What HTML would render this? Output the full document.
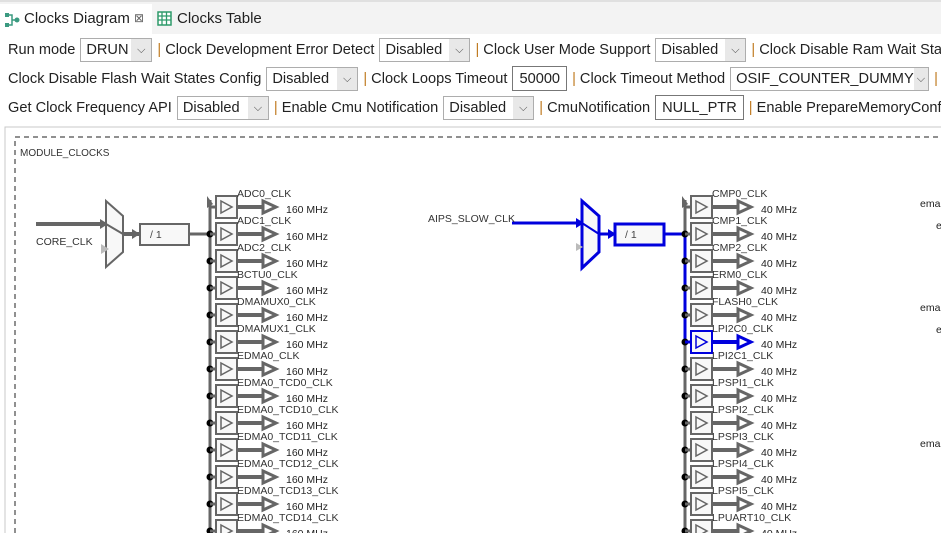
<!DOCTYPE html>
<html><head><meta charset="utf-8"><style>
body{margin:0;width:941px;height:533px;overflow:hidden;background:#fff;font-family:"Liberation Sans",sans-serif;position:relative}
.tabs{position:absolute;left:0;top:0;width:941px;height:34px;background:#f3f3f3;border-top:2px solid #e0e0e0;box-sizing:border-box}
.tab1{position:absolute;left:0;top:2px;width:152px;height:32px;background:#fff}
.tt{position:absolute;font-size:15px;color:#222;top:8px;font-family:"Liberation Sans",sans-serif}
.row{position:absolute;left:8px;font-size:14.6px;color:#222;white-space:nowrap;display:flex;align-items:center}
.sel{display:inline-flex;align-items:center;height:24px;border:1px solid #adadad;margin:0 5px;padding-left:5px;box-sizing:border-box;background:#fff}
.sel span{display:inline-block;width:20px;height:22px;background:#e8e8e8;margin-left:4px;text-align:center;font-size:11px;line-height:22px;color:#444}
.txt{display:inline-block;height:25px;border:1px solid #777;margin:0 5px;padding:0 6px;line-height:25px;box-sizing:border-box}
.p{color:#c07a20}
</style></head><body>
<div class="tabs"><div class="tab1"></div>
<svg style="position:absolute;left:4px;top:10px" width="16" height="16"><rect x="1" y="1" width="4" height="4" fill="#3a9a80"/><rect x="1" y="11" width="4" height="4" fill="#3a9a80"/><path d="M5 3H8V13H5M8 8H11" stroke="#3a9a80" stroke-width="1.5" fill="none"/><circle cx="13" cy="8" r="2.5" fill="#3a9a80"/></svg>
<div class="tt" style="left:24px">Clocks Diagram</div>
<div class="tt" style="left:134px;font-size:12px;color:#666;top:9px">⊠</div>
<svg style="position:absolute;left:157px;top:9px" width="15" height="15"><rect x="1" y="1" width="13" height="13" fill="#fff" stroke="#2e9a6a" stroke-width="1.5"/><path d="M1 5H14M1 9H14M5 1V14M9.5 1V14" stroke="#2e9a6a" stroke-width="1.3"/></svg>
<div class="tt" style="left:177px">Clocks Table</div>
</div>
<div class="row" style="top:38px">Run mode<div class="sel" style="width:72px">DRUN<span style="margin-left:auto">⌵</span></div><span class="p">|</span>&nbsp;Clock Development Error Detect<div class="sel" style="width:91px">Disabled<span style="margin-left:auto">⌵</span></div><span class="p">|</span>&nbsp;Clock User Mode Support<div class="sel" style="width:91px">Disabled<span style="margin-left:auto">⌵</span></div><span class="p">|</span>&nbsp;Clock Disable Ram Wait States</div>
<div class="row" style="top:66px">Clock Disable Flash Wait States Config<div class="sel" style="width:92px">Disabled<span style="margin-left:auto">⌵</span></div><span class="p">|</span>&nbsp;Clock Loops Timeout<div class="txt">50000</div><span class="p">|</span>&nbsp;Clock Timeout Method<div class="sel" style="width:199px">OSIF_COUNTER_DUMMY<span style="margin-left:auto">⌵</span></div><span class="p">|</span>&nbsp;C</div>
<div class="row" style="top:95px">Get Clock Frequency API<div class="sel" style="width:92px">Disabled<span style="margin-left:auto">⌵</span></div><span class="p">|</span>&nbsp;Enable Cmu Notification<div class="sel" style="width:91px">Disabled<span style="margin-left:auto">⌵</span></div><span class="p">|</span>&nbsp;CmuNotification<div class="txt">NULL_PTR</div><span class="p">|</span>&nbsp;Enable PrepareMemoryConfig</div>
<svg style="position:absolute;left:0;top:0" width="941" height="533" font-family="Liberation Sans,sans-serif" font-size="10.5">
<path d="M5 533V127H941" stroke="#c8c8c8" fill="none"/>
<path d="M15 533V137H941" stroke="#222" stroke-dasharray="5,4" fill="none"/>
<text x="20" y="156" font-size="10" fill="#333">MODULE_CLOCKS</text>
<text x="920" y="207" fill="#222">ema</text><text x="936" y="229" fill="#222">e</text>
<text x="920" y="311" fill="#222">ema</text><text x="936" y="333" fill="#222">e</text>
<text x="920" y="447" fill="#222">ema</text>
<path d="M36 224H106" stroke="#666" stroke-width="4"/><polygon points="100,219 108,224 100,229" fill="#666"/>
<polygon points="106,201 123,216 123,252 106,267" fill="#f8f8f8" stroke="#666" stroke-width="2"/>
<path d="M106 224L123 234" stroke="#666" stroke-width="2"/>
<polygon points="101,244 109,249 101,254" fill="#bbb"/>
<text x="36" y="245" fill="#333" font-size="10.5">CORE_CLK</text>
<path d="M123 234H140" stroke="#666" stroke-width="4"/><polygon points="132,229 140,234 132,239" fill="#666"/>
<rect x="140" y="224" width="49" height="21" fill="#f8f8f8" stroke="#666" stroke-width="2"/>
<text x="150" y="238" fill="#444">/ 1</text>
<path d="M189 234H210M210 200V533" stroke="#666" stroke-width="3"/>
<polygon points="207,196 213,204 207,208" fill="#666"/>
<path d="M512 223H582" stroke="#0000dd" stroke-width="3"/><polygon points="576,218 584,223 576,228" fill="#0000dd"/>
<polygon points="582,201 599,216 599,252 582,268" fill="#f8f8f8" stroke="#0000dd" stroke-width="3"/>
<path d="M582 223L599 234" stroke="#0000dd" stroke-width="2"/>
<polygon points="576,243 583,247 576,251" fill="#bbb"/>
<text x="428" y="222" fill="#333">AIPS_SLOW_CLK</text>
<path d="M599 234H615" stroke="#0000dd" stroke-width="3"/><polygon points="608,229 616,234 608,239" fill="#0000dd"/>
<rect x="615" y="224" width="49" height="21" fill="#f8f8f8" stroke="#0000dd" stroke-width="3"/>
<text x="625" y="238" fill="#444">/ 1</text>
<path d="M685 200V533" stroke="#666" stroke-width="3"/>
<polygon points="682,196 688,204 682,208" fill="#666"/>
<path d="M664 234H685V345" stroke="#0000dd" stroke-width="3" fill="none"/>
<g id="rows"></g>
</svg>
<script>
var L=["ADC0_CLK","ADC1_CLK","ADC2_CLK","BCTU0_CLK","DMAMUX0_CLK","DMAMUX1_CLK","EDMA0_CLK","EDMA0_TCD0_CLK","EDMA0_TCD10_CLK","EDMA0_TCD11_CLK","EDMA0_TCD12_CLK","EDMA0_TCD13_CLK","EDMA0_TCD14_CLK"];
var R=["CMP0_CLK","CMP1_CLK","CMP2_CLK","ERM0_CLK","FLASH0_CLK","LPI2C0_CLK","LPI2C1_CLK","LPSPI1_CLK","LPSPI2_CLK","LPSPI3_CLK","LPSPI4_CLK","LPSPI5_CLK","LPUART10_CLK"];
var s="";
function row(bx,busx,c,lab,fq,col,dot){
 if(dot)s+='<circle cx="'+busx+'" cy="'+c+'" r="3.5" fill="#000"/>';
 s+='<path d="M'+busx+' '+c+'H'+bx+'" stroke="'+col+'" stroke-width="3"/>';
 s+='<rect x="'+bx+'" y="'+(c-11)+'" width="21" height="22" fill="#f8f8f8" stroke="'+col+'" stroke-width="2"/>';
 s+='<polygon points="'+(bx+5)+','+(c-6)+' '+(bx+16)+','+c+' '+(bx+5)+','+(c+6)+'" fill="none" stroke="'+col+'" stroke-width="1.5"/>';
 s+='<path d="M'+(bx+21)+' '+c+'H'+(bx+48)+'" stroke="'+col+'" stroke-width="4"/>';
 s+='<polygon points="'+(bx+47)+','+(c-6)+' '+(bx+60)+','+c+' '+(bx+47)+','+(c+6)+'" fill="none" stroke="'+col+'" stroke-width="3"/>';
 s+='<text x="'+(bx+21)+'" y="'+(c-10)+'" fill="#333">'+lab+'</text>';
 s+='<text x="'+(bx+70)+'" y="'+(c+6)+'" fill="#222">'+fq+'</text>';
}
for(var k=0;k<13;k++){var c=207+27*k;
 row(216,210,c,L[k],"160 MHz","#666",k>0);
 row(691,685,c,R[k],"40 MHz",k==5?"#0000dd":"#666",k>0);}
document.getElementById("rows").innerHTML=s;
</script>
</body></html>
